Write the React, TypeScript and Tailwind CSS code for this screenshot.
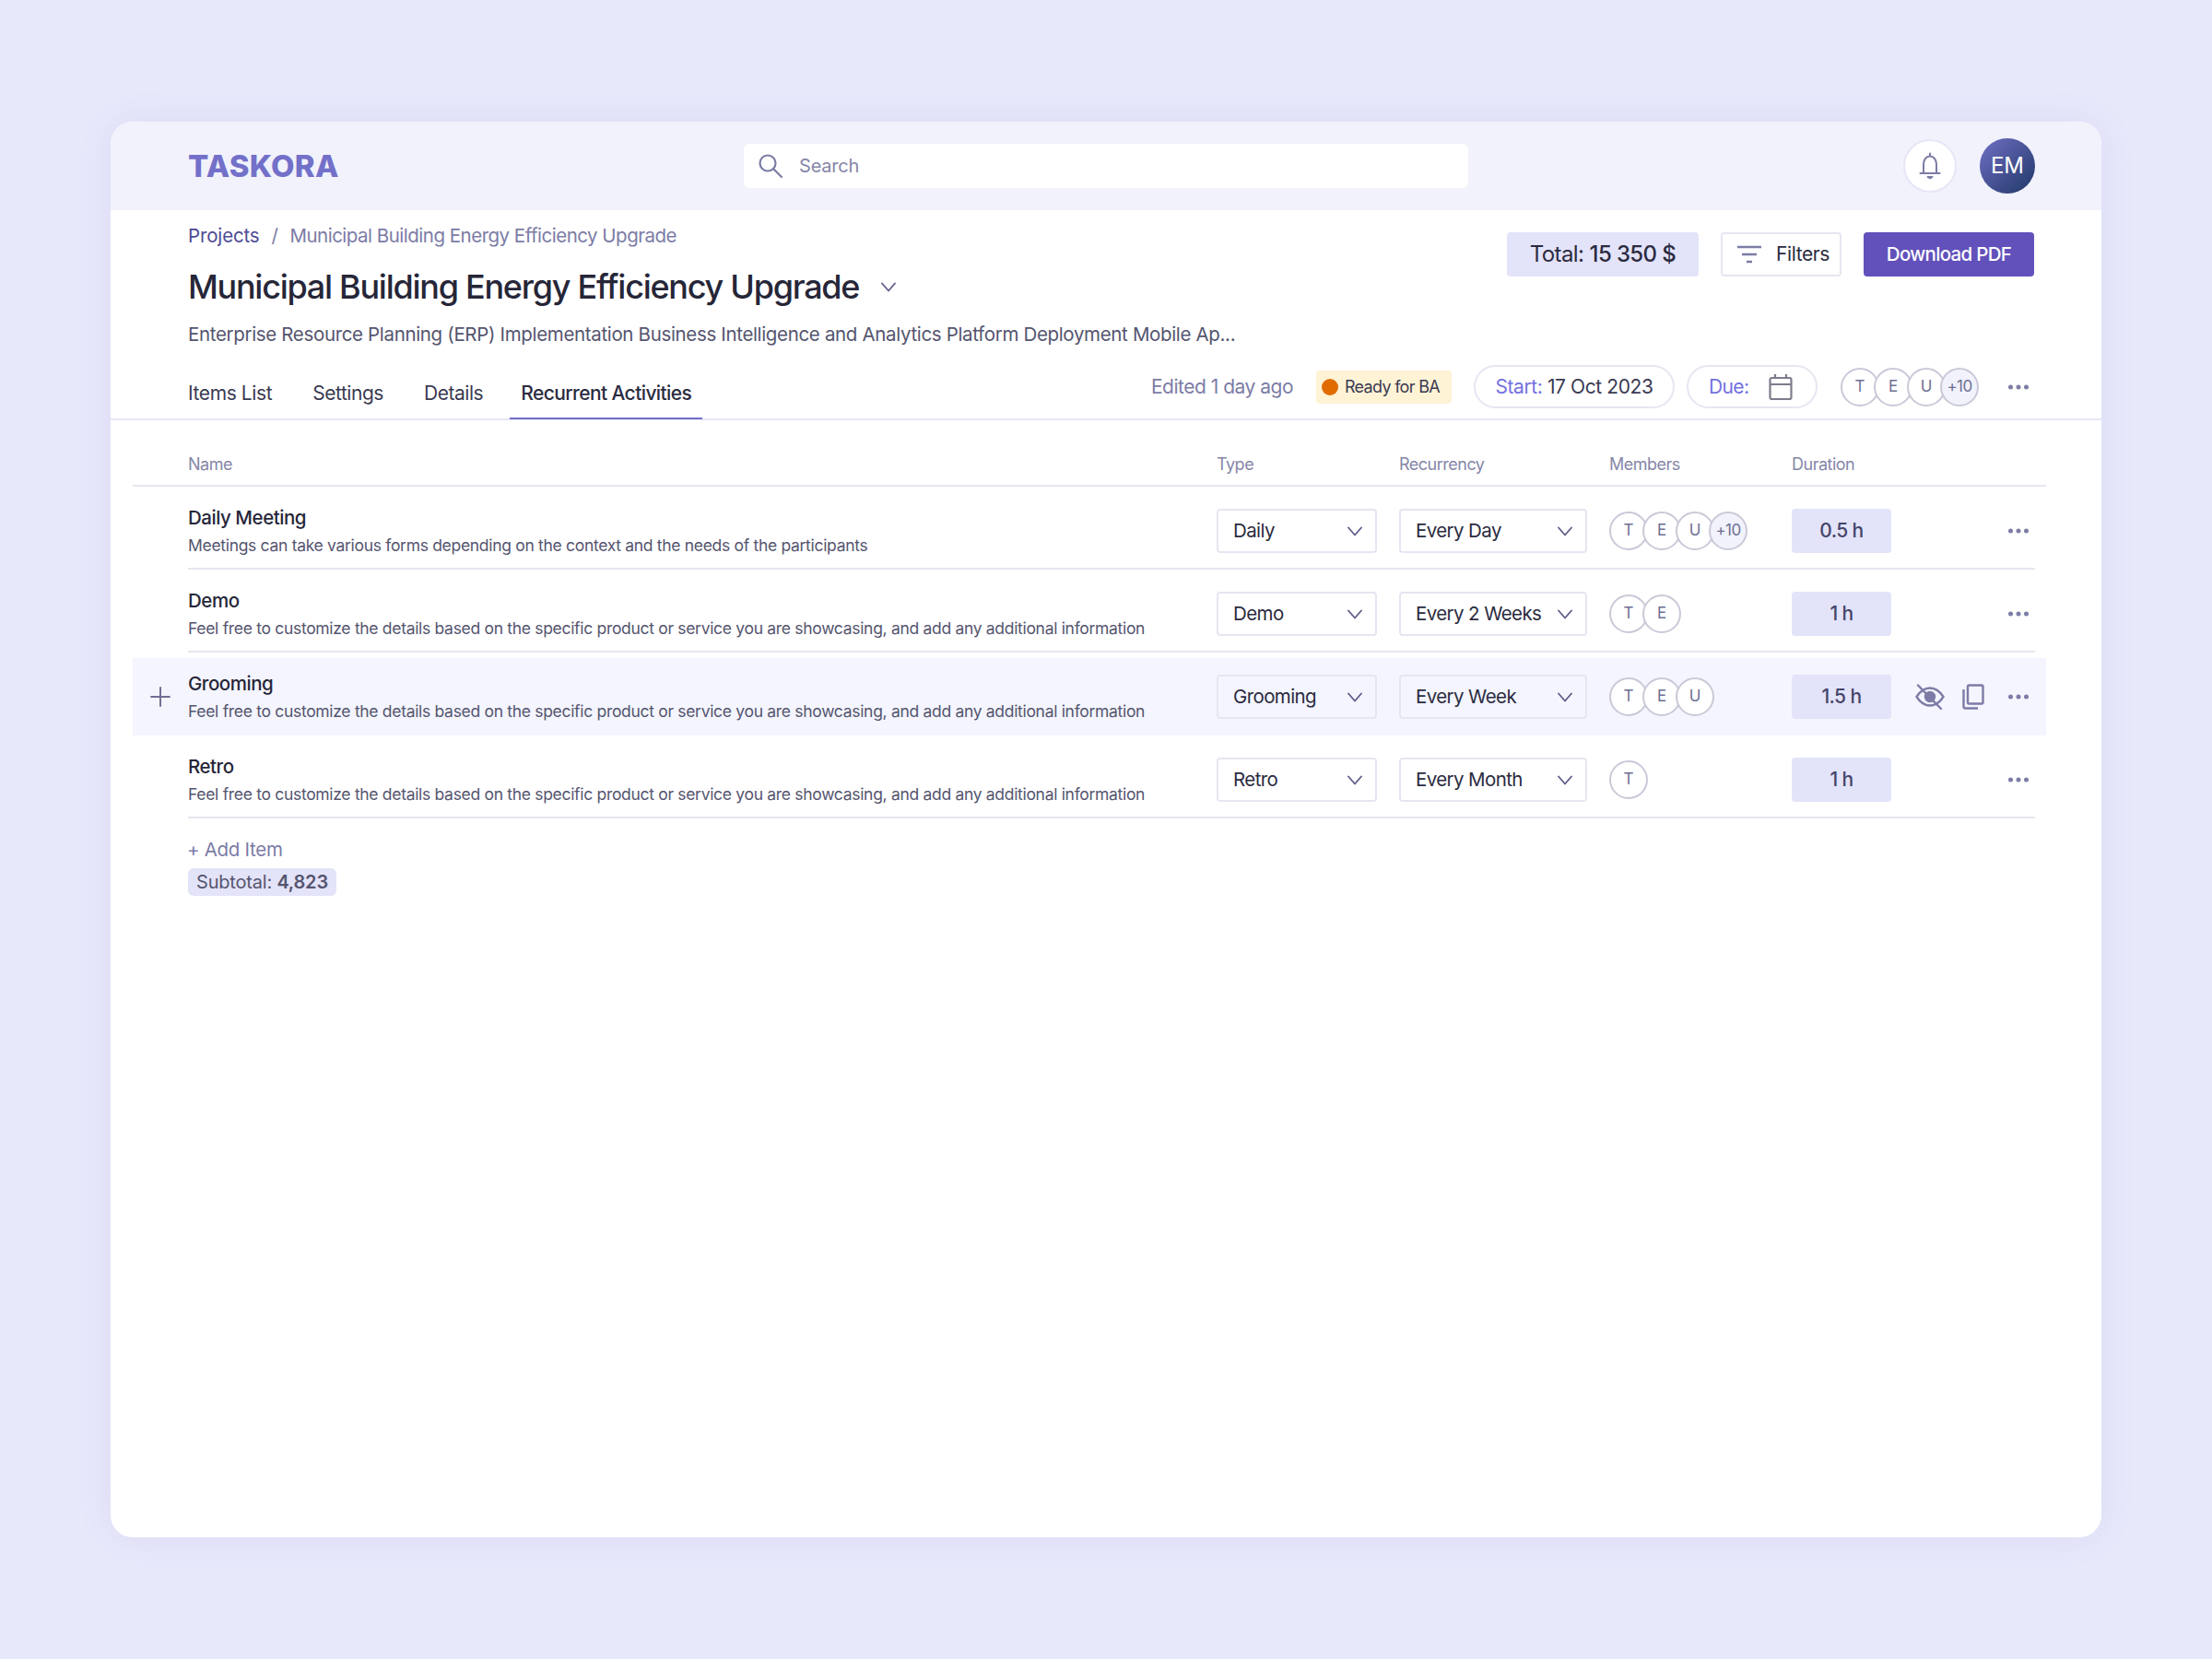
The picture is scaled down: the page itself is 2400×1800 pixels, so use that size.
import React from 'react';
import { Plus } from 'lucide-react';

const rows = [
  { name: 'Daily Meeting', desc: 'Meetings can take various forms depending on the context and the needs of the participants', type: 'Daily', rec: 'Every Day', members: ['T', 'E', 'U', '+10'], dur: '0.5 h' },
  { name: 'Demo', desc: 'Feel free to customize the details based on the specific product or service you are showcasing, and add any additional information', type: 'Demo', rec: 'Every 2 Weeks', members: ['T', 'E'], dur: '1 h' },
  { name: 'Grooming', desc: 'Feel free to customize the details based on the specific product or service you are showcasing, and add any additional information', type: 'Grooming', rec: 'Every Week', members: ['T', 'E', 'U'], dur: '1.5 h', active: true },
  { name: 'Retro', desc: 'Feel free to customize the details based on the specific product or service you are showcasing, and add any additional information', type: 'Retro', rec: 'Every Month', members: ['T'], dur: '1 h' },
];

function Dots() {
  return (
    <svg width="22" height="6" viewBox="0 0 22 6" className="fill-[#7c7ca6]">
      <circle cx="2.5" cy="3" r="2.5" />
      <circle cx="11" cy="3" r="2.5" />
      <circle cx="19.5" cy="3" r="2.5" />
    </svg>
  );
}

function Chevron() {
  return (
    <svg width="16" height="11" viewBox="0 0 16 11" fill="none" className="stroke-[#5d5d8a]" strokeWidth="1.8" strokeLinecap="round" strokeLinejoin="round">
      <path d="M1 1.5 8 9.5 15 1.5" />
    </svg>
  );
}

function Members({ items }: { items: string[] }) {
  return (
    <div className="flex">
      {items.map((m, i) => (
        <div
          key={m}
          className={`flex h-[42px] w-[42px] items-center justify-center rounded-full border-2 border-[#c9c9d8] text-[17px] text-[#6f6f93] ${i > 0 ? '-ml-[6px]' : ''} ${m === '+10' ? 'bg-[#f1f2fc] tracking-[-0.6px]' : 'bg-white'}`}
        >
          {m}
        </div>
      ))}
    </div>
  );
}

function Select({ label, width, active }: { label: string; width: string; active?: boolean }) {
  return (
    <div className={`flex h-[48px] ${width} items-center justify-between rounded-[4px] border-2 border-[#e6e6f2] pl-[16px] pr-[14px] text-[20.5px] tracking-[-0.6px] text-[#2b2b40] ${active ? 'bg-[#f4f5fe]' : 'bg-white'}`}>
      <span>{label}</span>
      <Chevron />
    </div>
  );
}

export default function App() {
  return (
    <div className="min-h-[1800px] bg-[#e7e8fa] px-[120px] pt-[132px] font-['Inter',sans-serif]">
      <div className="h-[1536px] w-[2160px] overflow-hidden rounded-[24px] bg-white shadow-[0_0_40px_rgba(90,90,190,0.08)]">
        {/* Header */}
        <div className="flex h-[96px] items-center bg-[#f1f2fc] pl-[84px] pr-[72px]">
          <div className="w-[603px] text-[33px] font-extrabold leading-none tracking-[0.3px] text-[#7370c9]">TASKORA</div>
          <div className="flex h-[48px] w-[786px] items-center rounded-[6px] bg-white pl-[15px]">
            <svg width="28" height="28" viewBox="0 0 28 28" fill="none" className="stroke-[#7c7ca6]" strokeWidth="2.2" strokeLinecap="round">
              <circle cx="11" cy="11" r="8.5" />
              <path d="M17.5 17.5 26 26" />
            </svg>
            <span className="ml-[17px] text-[20px] tracking-[-0.2px] text-[#8686a8]">Search</span>
          </div>
          <div className="ml-auto flex h-[58px] w-[58px] items-center justify-center rounded-full border-2 border-[#e6e6f7] bg-white">
            <svg width="24" height="30" viewBox="0 0 24 30" fill="none" className="stroke-[#7c7ca6]" strokeWidth="2" strokeLinejoin="round" strokeLinecap="round">
              <path d="M12 1.5v3M5 23V13a7 8.5 0 0 1 14 0v10M1.5 23h21" />
              <path d="M9.5 27h5L12 28.5Z" className="fill-[#7c7ca6]" />
            </svg>
          </div>
          <div className="ml-[25px] flex h-[60px] w-[60px] items-center justify-center rounded-full bg-gradient-to-br from-[#7270c6] to-[#1f3868] text-[24px] text-white">EM</div>
        </div>

        {/* Title block */}
        <div className="flex justify-between pl-[84px] pr-[73px]">
          <div className="pt-[16px]">
            <div className="flex h-[24px] items-center text-[20.5px] tracking-[-0.5px] text-[#7c7ca6]">
              <span className="tracking-[-0.15px] text-[#4d4a94]">Projects</span>
              <span className="mx-[13px]">/</span>
              <span>Municipal Building Energy Efficiency Upgrade</span>
            </div>
            <div className="mt-[21px] flex h-[44px] items-center text-[36px] font-medium tracking-[-1.27px] text-[#262638]">
              Municipal Building Energy Efficiency Upgrade
              <span className="ml-[24px]"><Chevron /></span>
            </div>
            <div className="mt-[16px] h-[28px] text-[20.5px] leading-[28px] tracking-[-0.34px] text-[#55556f]">
              Enterprise Resource Planning (ERP) Implementation Business Intelligence and Analytics Platform Deployment Mobile Ap...
            </div>
          </div>
          <div className="flex gap-[24px] pt-[24px]">
            <div className="flex h-[48px] w-[208px] items-center justify-center rounded-[4px] bg-[#e3e3f9] text-[24px] tracking-[-0.6px] text-[#2b2b40]">
              Total:&nbsp;<span className="font-medium">15 350 $</span>
            </div>
            <div className="flex h-[48px] w-[131px] items-center rounded-[4px] border-2 border-[#e6e6f2] bg-white pl-[15px] text-[21px] tracking-[-0.4px] text-[#2b2b40]">
              <svg width="28" height="20" viewBox="0 0 28 20" className="stroke-[#7c7ca6]" strokeWidth="2.4">
                <path d="M1 2h26M6 10h16M11 18h6" />
              </svg>
              <span className="ml-[15px]">Filters</span>
            </div>
            <div className="flex h-[48px] w-[185px] items-center justify-center rounded-[4px] bg-[#6251bb] text-[20.5px] font-medium tracking-[-0.7px] text-white">Download PDF</div>
          </div>
        </div>

        {/* Tabs */}
        <div className="mt-[19px] flex h-[60px] border-b-2 border-[#e6e6f7] pl-[72px] pr-[79px]">
          <div className="flex gap-[20px]">
            <div className="flex h-[58px] items-center px-[12px] pt-[3px] text-[21px] tracking-[-0.4px] text-[#3a3a52]">Items List</div>
            <div className="flex h-[58px] items-center px-[12px] pt-[3px] text-[21px] tracking-[-0.45px] text-[#3a3a52]">Settings</div>
            <div className="flex h-[58px] items-center px-[12px] pt-[3px] text-[21px] tracking-[-0.45px] text-[#3a3a52]">Details</div>
            <div className="-ml-[3px] flex h-[59px] items-center border-b-2 border-[#7370c9] px-[12px] pt-[4px] text-[21px] font-medium tracking-[-0.6px] text-[#2b2b40]">Recurrent Activities</div>
          </div>
          <div className="ml-auto flex h-[47px] items-center">
            <span className="text-[21px] tracking-[-0.5px] text-[#7c7ca6]">Edited 1 day ago</span>
            <div className="ml-[25px] flex h-[36px] w-[147px] items-center rounded-[4px] bg-[#fff3d6] pl-[6px] text-[18px] tracking-[-0.7px] text-[#3a3a52]">
              <span className="mr-[7px] h-[18px] w-[18px] rounded-full bg-[#e06c00]" />
              Ready for BA
            </div>
            <div className="ml-[24px] flex h-[47px] w-[218px] items-center justify-center rounded-full border-2 border-[#e6e6f2] text-[21px] tracking-[-0.4px] text-[#3a3a52]">
              <span className="text-[#7370e0]">Start:</span>&nbsp;17 Oct 2023
            </div>
            <div className="ml-[13px] flex h-[47px] w-[142px] items-center rounded-full border-2 border-[#e6e6f2] pl-[22px] text-[21px] tracking-[-0.6px] text-[#7370e0]">
              Due:
              <svg width="26" height="30" viewBox="0 0 26 30" fill="none" className="ml-[22px] stroke-[#7c7c8c]" strokeWidth="2.2">
                <rect x="1.5" y="5" width="23" height="23" rx="2" />
                <path d="M1.5 12h23M7 1v4M19 1v4" />
              </svg>
            </div>
            <div className="ml-[25px]"><Members items={['T', 'E', 'U', '+10']} /></div>
            <div className="ml-[32px]"><Dots /></div>
          </div>
        </div>

        {/* Table */}
        <div className="ml-[24px] mr-[60px]">
          <div className="grid h-[72px] grid-cols-[1116px_198px_228px_198px_1fr] items-center border-b-2 border-[#e6e6ef] pl-[60px] pt-[24px] text-[18px] tracking-[-0.5px] text-[#8686a8]">
            <span>Name</span>
            <span>Type</span>
            <span>Recurrency</span>
            <span>Members</span>
            <span>Duration</span>
          </div>
          {rows.map((r) => (
            <div key={r.name} className={r.active ? 'mt-[6px] flex h-[84px] items-center bg-[#f4f5fe]' : 'ml-[60px] mr-[12px] flex h-[90px] items-center border-b-2 border-[#e6e6ef] pt-[8px]'}>
              {r.active && (
                <div className="flex w-[60px] justify-center">
                  <Plus size={34} strokeWidth={1.4} className="text-[#6f6f93]" />
                </div>
              )}
              <div className="w-[1116px]">
                <div className="text-[20.5px] font-medium leading-[26px] tracking-[-0.47px] text-[#262638]">{r.name}</div>
                <div className="mt-[5px] text-[17.5px] leading-[24px] tracking-[-0.31px] text-[#55556f]">{r.desc}</div>
              </div>
              <div className="w-[198px]"><Select label={r.type} width="w-[174px]" active={r.active} /></div>
              <div className="w-[228px]"><Select label={r.rec} width="w-[204px]" active={r.active} /></div>
              <div className="w-[198px]"><Members items={r.members} /></div>
              <div className="flex h-[48px] w-[108px] items-center justify-center rounded-[4px] bg-[#e3e3f9] text-[21px] font-medium tracking-[-0.6px] text-[#45456a]">{r.dur}</div>
              <div className={`flex flex-1 items-center justify-end ${r.active ? 'pr-[19px]' : 'pr-[7px]'}`}>
                {r.active && (
                  <>
                    <svg width="32" height="28" viewBox="0 0 32 28" fill="none" className="stroke-[#7c7ca6]" strokeWidth="2.4" strokeLinecap="round">
                      <path d="M1.5 14C6 7 10.5 4.5 16 4.5S26 7 30.5 14C26 21 21.5 23.5 16 23.5S6 21 1.5 14Z" />
                      <circle cx="16" cy="14" r="5" className="fill-[#7c7ca6]" />
                      <path d="M3 1.5 28 27" />
                    </svg>
                    <svg width="24" height="28" viewBox="0 0 24 28" fill="none" className="ml-[19px] mr-[26px] stroke-[#7c7ca6]" strokeWidth="2.4">
                      <rect x="6" y="1.5" width="16.5" height="20" rx="1.5" />
                      <path d="M1.5 6v19a1.5 1.5 0 0 0 1.5 1.5h14" />
                    </svg>
                  </>
                )}
                <Dots />
              </div>
            </div>
          ))}
          <div className="ml-[59px] mt-[21px] text-[20.5px] leading-[26px] tracking-[-0.3px] text-[#7c7ca6]">+ Add Item</div>
          <div className="ml-[60px] mt-[7px] flex h-[30px] w-[161px] items-center justify-center rounded-[6px] bg-[#e3e3f9] text-[20px] tracking-[-0.2px] text-[#55556f]">
            Subtotal:&nbsp;<span className="font-semibold">4,823</span>
          </div>
        </div>
      </div>
    </div>
  );
}
